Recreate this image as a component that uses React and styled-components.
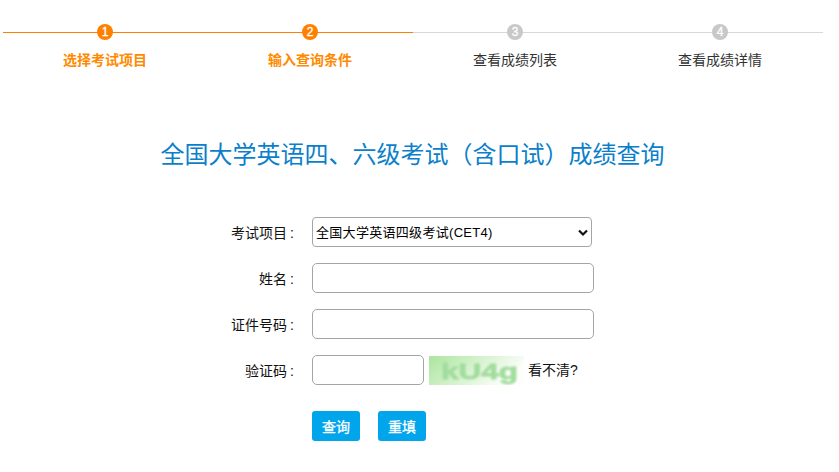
import React from "react";
import styled, { createGlobalStyle } from "styled-components";

const FONT = `"Liberation Sans", "Noto Sans CJK SC", sans-serif`;

const Global = createGlobalStyle`
  html, body { margin: 0; padding: 0; background: #fff; }
  body { font-family: ${FONT}; font-size: 14px; color: #000; }
  * { box-sizing: border-box; }
`;

const Page = styled.div`
  width: 839px;
  height: 472px;
  overflow: hidden;
  padding: 24px 16px 0 3px;
`;

const Stepper = styled.ol`
  display: grid;
  grid-template-columns: repeat(4, 205px);
  list-style: none;
  margin: 0;
  padding: 0;
`;

const Step = styled.li`
  position: relative;
  display: flex;
  flex-direction: column;
  align-items: center;
  gap: 10px;
  padding-right: 1px;
  color: ${(p) => (p.$active ? "#ff8a00" : "#333")};
  font-weight: ${(p) => (p.$active ? 700 : 400)};

  &::before {
    content: "";
    position: absolute;
    top: 8px;
    left: 0;
    right: 0;
    height: 1px;
    background: ${(p) => (p.$active ? "#ff8000" : "#d8d8d8")};
  }
`;

const StepDot = styled.span`
  position: relative;
  width: 16px;
  height: 16px;
  border-radius: 50%;
  background: ${(p) => (p.$active ? "#ff8000" : "#c8c8c8")};
  color: #fff;
  font-size: 12px;
  font-weight: 400;
  -webkit-text-stroke: 0.3px #fff;
  line-height: 16px;
  text-align: center;
`;

const StepLabel = styled.span`
  font-size: 14px;
  line-height: 20px;
`;

const Title = styled.h1`
  width: 819px;
  margin: 68px 0 0;
  color: #0b7fcc;
  font-size: 24px;
  font-weight: 400;
  line-height: 34px;
  text-align: center;
`;

const Form = styled.form`
  display: flex;
  flex-direction: column;
  gap: 16px;
  margin-top: 45px;
`;

const Row = styled.div`
  display: grid;
  grid-template-columns: 291px auto;
  column-gap: 18px;
  align-items: center;
  height: 30px;
`;

const Label = styled.label`
  font-size: 14px;
  text-align: right;
  color: #111;
`;

const Colon = styled.span`
  margin-left: 3px;
`;

const Controls = styled.div`
  display: flex;
  align-items: center;
`;

const SelectWrap = styled.div`
  position: relative;
  width: 280px;
  height: 30px;

  svg {
    position: absolute;
    top: 12px;
    right: 4px;
    pointer-events: none;
  }
`;

const Select = styled.select`
  appearance: none;
  width: 100%;
  height: 100%;
  padding: 0 20px 0 3px;
  border: 1px solid #a5a5a5;
  border-radius: 4px;
  background: #fff;
  color: #000;
  font-family: ${FONT};
  font-size: 13px;
  letter-spacing: 0.3px;
`;

const Input = styled.input`
  width: ${(p) => p.$width}px;
  height: 30px;
  padding: 0 6px;
  border: 1px solid #a5a5a5;
  border-radius: 5px;
  background: #fff;
`;

const Captcha = styled.svg`
  display: block;
  margin-left: 5px;
  flex: none;
`;

const Refresh = styled.a`
  margin-left: 4px;
  color: #111;
  font-size: 14px;
  line-height: 30px;
`;

const Actions = styled.div`
  display: flex;
  gap: 18px;
  margin: 10px 0 0 309px;
`;

const Button = styled.button`
  width: 48px;
  height: 30px;
  padding: 0;
  border: 0;
  border-radius: 3px;
  background: #00a5ec;
  color: #fff;
  font-family: ${FONT};
  font-size: 14px;
  -webkit-text-stroke: 0.3px #fff;
`;

const steps = [
  ["1", "选择考试项目", true],
  ["2", "输入查询条件", true],
  ["3", "查看成绩列表", false],
  ["4", "查看成绩详情", false],
];

export default function App() {
  return (
    <Page>
      <Global />
      <Stepper>
        {steps.map(([n, text, active]) => (
          <Step key={n} $active={active}>
            <StepDot $active={active}>{n}</StepDot>
            <StepLabel>{text}</StepLabel>
          </Step>
        ))}
      </Stepper>
      <Title>全国大学英语四、六级考试（含口试）成绩查询</Title>
      <Form onSubmit={(e) => e.preventDefault()}>
        <Row>
          <Label>考试项目<Colon>:</Colon></Label>
          <SelectWrap>
            <Select defaultValue="CET4">
              <option value="CET4">全国大学英语四级考试(CET4)</option>
            </Select>
            <svg width="10" height="8" viewBox="0 0 10 8" fill="none">
              <path d="M1 1.5 5 5.5 9 1.5" stroke="#111" strokeWidth="2.2" />
            </svg>
          </SelectWrap>
        </Row>
        <Row>
          <Label>姓名<Colon>:</Colon></Label>
          <Controls>
            <Input $width={282} />
          </Controls>
        </Row>
        <Row>
          <Label>证件号码<Colon>:</Colon></Label>
          <Controls>
            <Input $width={282} />
          </Controls>
        </Row>
        <Row>
          <Label>验证码<Colon>:</Colon></Label>
          <Controls>
            <Input $width={112} />
            <Captcha width="95" height="29" viewBox="0 0 95 29">
              <defs>
                <linearGradient id="bg" x1="0" y1="0" x2="1" y2="0.35">
                  <stop offset="0" stopColor="#abe59f" />
                  <stop offset="0.55" stopColor="#d8f3d1" />
                  <stop offset="1" stopColor="#fdfefc" />
                </linearGradient>
                <filter id="soft" x="-10%" y="-10%" width="120%" height="120%">
                  <feGaussianBlur stdDeviation="0.8" />
                </filter>
              </defs>
              <rect width="95" height="29" fill="url(#bg)" />
              <text
                x="12"
                y="23"
                fill="#a3dd9e"
                stroke="#a3dd9e"
                strokeWidth="0.8"
                filter="url(#soft)"
                fontFamily="Liberation Sans, sans-serif"
                fontSize="22"
                fontWeight="700"
                textLength="77"
                lengthAdjust="spacingAndGlyphs"
              >
                kU4g
              </text>
            </Captcha>
            <Refresh>看不清?</Refresh>
          </Controls>
        </Row>
        <Actions>
          <Button type="button">查询</Button>
          <Button type="button">重填</Button>
        </Actions>
      </Form>
    </Page>
  );
}
